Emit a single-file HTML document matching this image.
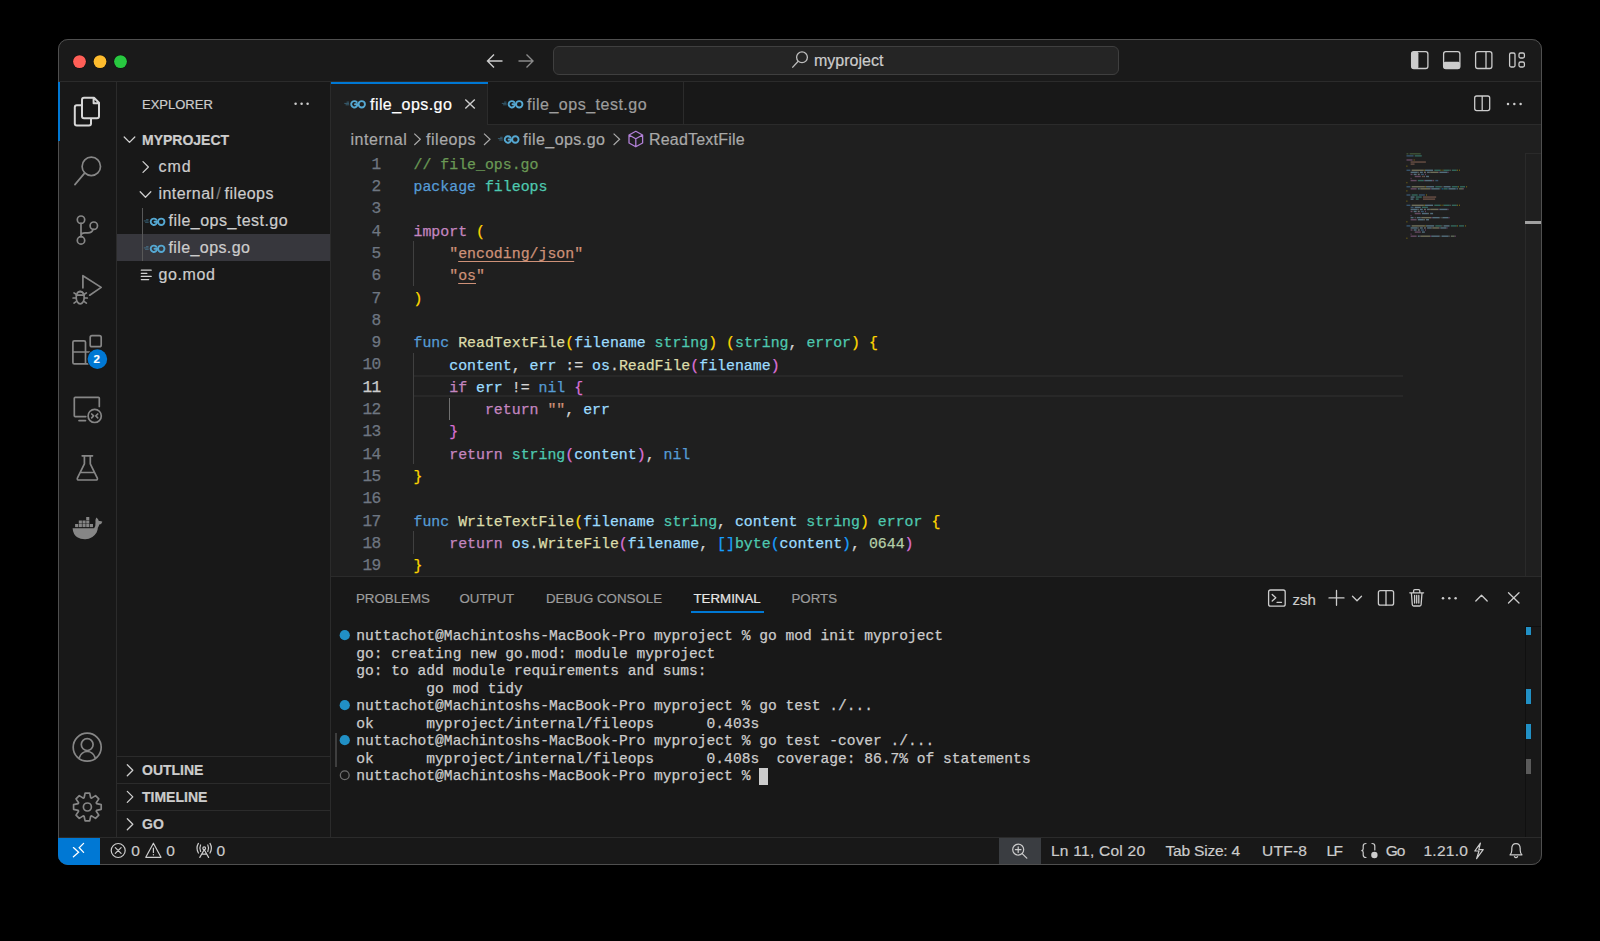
<!DOCTYPE html>
<html><head><meta charset="utf-8">
<style>
*{margin:0;padding:0;box-sizing:border-box}
html,body{width:1600px;height:941px;background:#000;overflow:hidden}
body{font-family:"Liberation Sans",sans-serif;color:#cccccc;position:relative}
.a{position:absolute}
.win{position:absolute;left:0;top:0;width:1600px;height:941px;clip-path:inset(39px 58px 76px 58px round 10px);background:#181818}
.frame{position:absolute;left:58px;top:39px;width:1484px;height:826px;border-radius:10px;border:1px solid #4f4f4f;pointer-events:none}
.m{font-family:"Liberation Mono",monospace}
svg{position:absolute;left:0;top:0;overflow:visible}
.t{position:absolute;white-space:pre;line-height:1;-webkit-text-stroke:0.2px currentColor}
.cl{position:absolute;white-space:pre;font-family:"Liberation Mono",monospace;-webkit-text-stroke:0.25px currentColor}
.cl span{-webkit-text-stroke:0.25px currentColor}
</style></head><body>
<div class="win">
<div class="a" style="left:58px;top:39px;width:1484px;height:43px;background:#1a1a1a;border-bottom:1px solid #2b2b2b"></div>
<div class="a" style="left:553px;top:46px;width:566px;height:29px;border-radius:6px;background:#252525;border:1px solid #3f3f3f"></div>
<div class="t" style="left:814px;top:52.9px;font-size:16px;color:#cccccc;">myproject</div>
<div class="a" style="left:58px;top:82px;width:59px;height:755px;background:#181818;border-right:1px solid #2b2b2b"></div>
<div class="t" style="left:93.6px;top:352.6px;font-size:11.5px;color:#ffffff;font-weight:bold">2</div>
<div class="a" style="left:117px;top:82px;width:214px;height:755px;background:#181818;border-right:1px solid #2b2b2b"></div>
<div class="t" style="left:142px;top:97.9px;font-size:13px;color:#cccccc;">EXPLORER</div>
<div class="t" style="left:142px;top:132.9px;font-size:14px;color:#cccccc;font-weight:bold">MYPROJECT</div>
<div class="t" style="left:158.5px;top:159.1px;font-size:16px;color:#cccccc;letter-spacing:0.9px">cmd</div>
<div class="t" style="left:158.5px;top:186.2px;font-size:16px;color:#cccccc;letter-spacing:0.45px">internal</div>
<div class="t" style="left:216.3px;top:186.2px;font-size:16px;color:#7a7a7a;">/</div>
<div class="t" style="left:224.5px;top:186.2px;font-size:16px;color:#cccccc;letter-spacing:0.45px">fileops</div>
<div class="a" style="left:117px;top:234px;width:213px;height:27px;background:#37373d"></div>
<div class="a" style="left:141.5px;top:208px;width:1px;height:53px;background:#585858"></div>
<div class="t" style="left:168.5px;top:213.3px;font-size:16px;color:#cccccc;letter-spacing:0.47px">file_ops_test.go</div>
<div class="t" style="left:168.5px;top:240.3px;font-size:16px;color:#cccccc;letter-spacing:0.4px">file_ops.go</div>
<div class="t" style="left:158.5px;top:267.4px;font-size:16px;color:#cccccc;letter-spacing:0.6px">go.mod</div>
<div class="a" style="left:117px;top:755.5px;width:213px;height:1px;background:#2b2b2b"></div>
<div class="a" style="left:117px;top:782.5px;width:213px;height:1px;background:#2b2b2b"></div>
<div class="a" style="left:117px;top:809.5px;width:213px;height:1px;background:#2b2b2b"></div>
<div class="t" style="left:142px;top:763.4px;font-size:14px;color:#cccccc;font-weight:bold">OUTLINE</div>
<div class="t" style="left:142px;top:790.1px;font-size:14px;color:#cccccc;font-weight:bold">TIMELINE</div>
<div class="t" style="left:142px;top:817.4px;font-size:14px;color:#cccccc;font-weight:bold">GO</div>
<div class="a" style="left:331px;top:82px;width:1211px;height:43px;background:#181818;border-bottom:1px solid #2b2b2b"></div>
<div class="a" style="left:331px;top:82px;width:157px;height:43px;background:#1f1f1f;border-right:1px solid #2b2b2b"></div>
<div class="a" style="left:331px;top:82px;width:157px;height:2px;background:#0078d4"></div>
<div class="a" style="left:488px;top:82px;width:196px;height:42px;border-right:1px solid #2b2b2b"></div>
<div class="t" style="left:370px;top:96.7px;font-size:16px;color:#ffffff;letter-spacing:0.44px">file_ops.go</div>
<div class="t" style="left:527px;top:96.7px;font-size:16px;color:#9d9d9d;letter-spacing:0.5px">file_ops_test.go</div>
<div class="a" style="left:331px;top:125px;width:1211px;height:451px;background:#1f1f1f"></div>
<div class="t" style="left:350.5px;top:132px;font-size:16px;color:#a9a9a9;letter-spacing:0.55px">internal</div>
<div class="t" style="left:426px;top:132px;font-size:16px;color:#a9a9a9;letter-spacing:0.53px">fileops</div>
<div class="t" style="left:523px;top:132px;font-size:16px;color:#a9a9a9;letter-spacing:0.46px">file_ops.go</div>
<div class="t" style="left:649px;top:132px;font-size:16px;color:#a9a9a9;letter-spacing:0.2px">ReadTextFile</div>
<div class="a" style="left:413px;top:375.2px;width:990px;height:22.3px;border-top:2px solid #282828;border-bottom:2px solid #282828"></div>
<div class="a" style="left:412.9px;top:241.4px;width:1px;height:44.6px;background:#404040"></div>
<div class="a" style="left:412.9px;top:352.9px;width:1px;height:111.5px;background:#404040"></div>
<div class="a" style="left:448.6px;top:397.5px;width:1px;height:22.3px;background:#707070"></div>
<div class="a" style="left:412.9px;top:531.3px;width:1px;height:22.3px;background:#404040"></div>
<div class="cl" style="left:330px;width:50.4px;text-align:right;top:156.79px;font-size:16.2px;letter-spacing:-0.8px;line-height:1;color:#6e7681">1</div>
<div class="cl" style="left:413.5px;top:157.80px;font-size:14.88px;line-height:1"><span style="color:#6a9955">// file_ops.go</span></div>
<div class="cl" style="left:330px;width:50.4px;text-align:right;top:179.09px;font-size:16.2px;letter-spacing:-0.8px;line-height:1;color:#6e7681">2</div>
<div class="cl" style="left:413.5px;top:180.10px;font-size:14.88px;line-height:1"><span style="color:#569cd6">package</span><span style="color:#d4d4d4"> </span><span style="color:#4ec9b0">fileops</span></div>
<div class="cl" style="left:330px;width:50.4px;text-align:right;top:201.39px;font-size:16.2px;letter-spacing:-0.8px;line-height:1;color:#6e7681">3</div>
<div class="cl" style="left:330px;width:50.4px;text-align:right;top:223.69px;font-size:16.2px;letter-spacing:-0.8px;line-height:1;color:#6e7681">4</div>
<div class="cl" style="left:413.5px;top:224.70px;font-size:14.88px;line-height:1"><span style="color:#c586c0">import</span><span style="color:#d4d4d4"> </span><span style="color:#ffd700">(</span></div>
<div class="cl" style="left:330px;width:50.4px;text-align:right;top:245.99px;font-size:16.2px;letter-spacing:-0.8px;line-height:1;color:#6e7681">5</div>
<div class="cl" style="left:413.5px;top:247.00px;font-size:14.88px;line-height:1"><span style="color:#d4d4d4">    </span><span style="color:#ce9178">&quot;</span><span style="color:#ce9178;text-decoration:underline;text-underline-offset:3px">encoding/json</span><span style="color:#ce9178">&quot;</span></div>
<div class="cl" style="left:330px;width:50.4px;text-align:right;top:268.29px;font-size:16.2px;letter-spacing:-0.8px;line-height:1;color:#6e7681">6</div>
<div class="cl" style="left:413.5px;top:269.30px;font-size:14.88px;line-height:1"><span style="color:#d4d4d4">    </span><span style="color:#ce9178">&quot;</span><span style="color:#ce9178;text-decoration:underline;text-underline-offset:3px">os</span><span style="color:#ce9178">&quot;</span></div>
<div class="cl" style="left:330px;width:50.4px;text-align:right;top:290.59px;font-size:16.2px;letter-spacing:-0.8px;line-height:1;color:#6e7681">7</div>
<div class="cl" style="left:413.5px;top:291.60px;font-size:14.88px;line-height:1"><span style="color:#ffd700">)</span></div>
<div class="cl" style="left:330px;width:50.4px;text-align:right;top:312.89px;font-size:16.2px;letter-spacing:-0.8px;line-height:1;color:#6e7681">8</div>
<div class="cl" style="left:330px;width:50.4px;text-align:right;top:335.19px;font-size:16.2px;letter-spacing:-0.8px;line-height:1;color:#6e7681">9</div>
<div class="cl" style="left:413.5px;top:336.20px;font-size:14.88px;line-height:1"><span style="color:#569cd6">func</span><span style="color:#d4d4d4"> </span><span style="color:#dcdcaa">ReadTextFile</span><span style="color:#ffd700">(</span><span style="color:#9cdcfe">filename</span><span style="color:#d4d4d4"> </span><span style="color:#4ec9b0">string</span><span style="color:#ffd700">)</span><span style="color:#d4d4d4"> </span><span style="color:#ffd700">(</span><span style="color:#4ec9b0">string</span><span style="color:#d4d4d4">, </span><span style="color:#4ec9b0">error</span><span style="color:#ffd700">)</span><span style="color:#d4d4d4"> </span><span style="color:#ffd700">{</span></div>
<div class="cl" style="left:330px;width:50.4px;text-align:right;top:357.49px;font-size:16.2px;letter-spacing:-0.8px;line-height:1;color:#6e7681">10</div>
<div class="cl" style="left:413.5px;top:358.50px;font-size:14.88px;line-height:1"><span style="color:#d4d4d4">    </span><span style="color:#9cdcfe">content</span><span style="color:#d4d4d4">, </span><span style="color:#9cdcfe">err</span><span style="color:#d4d4d4"> := </span><span style="color:#9cdcfe">os</span><span style="color:#d4d4d4">.</span><span style="color:#dcdcaa">ReadFile</span><span style="color:#da70d6">(</span><span style="color:#9cdcfe">filename</span><span style="color:#da70d6">)</span></div>
<div class="cl" style="left:330px;width:50.4px;text-align:right;top:379.79px;font-size:16.2px;letter-spacing:-0.8px;line-height:1;color:#cccccc">11</div>
<div class="cl" style="left:413.5px;top:380.80px;font-size:14.88px;line-height:1"><span style="color:#d4d4d4">    </span><span style="color:#c586c0">if</span><span style="color:#d4d4d4"> </span><span style="color:#9cdcfe">err</span><span style="color:#d4d4d4"> != </span><span style="color:#569cd6">nil</span><span style="color:#d4d4d4"> </span><span style="color:#da70d6">{</span></div>
<div class="cl" style="left:330px;width:50.4px;text-align:right;top:402.09px;font-size:16.2px;letter-spacing:-0.8px;line-height:1;color:#6e7681">12</div>
<div class="cl" style="left:413.5px;top:403.10px;font-size:14.88px;line-height:1"><span style="color:#d4d4d4">        </span><span style="color:#c586c0">return</span><span style="color:#d4d4d4"> </span><span style="color:#ce9178">&quot;&quot;</span><span style="color:#d4d4d4">, </span><span style="color:#9cdcfe">err</span></div>
<div class="cl" style="left:330px;width:50.4px;text-align:right;top:424.39px;font-size:16.2px;letter-spacing:-0.8px;line-height:1;color:#6e7681">13</div>
<div class="cl" style="left:413.5px;top:425.40px;font-size:14.88px;line-height:1"><span style="color:#d4d4d4">    </span><span style="color:#da70d6">}</span></div>
<div class="cl" style="left:330px;width:50.4px;text-align:right;top:446.69px;font-size:16.2px;letter-spacing:-0.8px;line-height:1;color:#6e7681">14</div>
<div class="cl" style="left:413.5px;top:447.70px;font-size:14.88px;line-height:1"><span style="color:#d4d4d4">    </span><span style="color:#c586c0">return</span><span style="color:#d4d4d4"> </span><span style="color:#4ec9b0">string</span><span style="color:#da70d6">(</span><span style="color:#9cdcfe">content</span><span style="color:#da70d6">)</span><span style="color:#d4d4d4">, </span><span style="color:#569cd6">nil</span></div>
<div class="cl" style="left:330px;width:50.4px;text-align:right;top:468.99px;font-size:16.2px;letter-spacing:-0.8px;line-height:1;color:#6e7681">15</div>
<div class="cl" style="left:413.5px;top:470.00px;font-size:14.88px;line-height:1"><span style="color:#ffd700">}</span></div>
<div class="cl" style="left:330px;width:50.4px;text-align:right;top:491.29px;font-size:16.2px;letter-spacing:-0.8px;line-height:1;color:#6e7681">16</div>
<div class="cl" style="left:330px;width:50.4px;text-align:right;top:513.59px;font-size:16.2px;letter-spacing:-0.8px;line-height:1;color:#6e7681">17</div>
<div class="cl" style="left:413.5px;top:514.60px;font-size:14.88px;line-height:1"><span style="color:#569cd6">func</span><span style="color:#d4d4d4"> </span><span style="color:#dcdcaa">WriteTextFile</span><span style="color:#ffd700">(</span><span style="color:#9cdcfe">filename</span><span style="color:#d4d4d4"> </span><span style="color:#4ec9b0">string</span><span style="color:#d4d4d4">, </span><span style="color:#9cdcfe">content</span><span style="color:#d4d4d4"> </span><span style="color:#4ec9b0">string</span><span style="color:#ffd700">)</span><span style="color:#d4d4d4"> </span><span style="color:#4ec9b0">error</span><span style="color:#d4d4d4"> </span><span style="color:#ffd700">{</span></div>
<div class="cl" style="left:330px;width:50.4px;text-align:right;top:535.89px;font-size:16.2px;letter-spacing:-0.8px;line-height:1;color:#6e7681">18</div>
<div class="cl" style="left:413.5px;top:536.90px;font-size:14.88px;line-height:1"><span style="color:#d4d4d4">    </span><span style="color:#c586c0">return</span><span style="color:#d4d4d4"> </span><span style="color:#9cdcfe">os</span><span style="color:#d4d4d4">.</span><span style="color:#dcdcaa">WriteFile</span><span style="color:#da70d6">(</span><span style="color:#9cdcfe">filename</span><span style="color:#d4d4d4">, </span><span style="color:#179fff">[]</span><span style="color:#4ec9b0">byte</span><span style="color:#179fff">(</span><span style="color:#9cdcfe">content</span><span style="color:#179fff">)</span><span style="color:#d4d4d4">, </span><span style="color:#b5cea8">0644</span><span style="color:#da70d6">)</span></div>
<div class="cl" style="left:330px;width:50.4px;text-align:right;top:558.19px;font-size:16.2px;letter-spacing:-0.8px;line-height:1;color:#6e7681">19</div>
<div class="cl" style="left:413.5px;top:559.20px;font-size:14.88px;line-height:1"><span style="color:#ffd700">}</span></div>
<div class="a" style="left:1525px;top:153px;width:1px;height:423px;background:#2a2a2a"></div>
<div class="a" style="left:1525px;top:153px;width:17px;height:1px;background:#2a2a2a"></div>
<div class="a" style="left:1525px;top:221px;width:17px;height:2.5px;background:#a0a0a0"></div>
<div class="a" style="left:331px;top:576px;width:1211px;height:261px;background:#181818;border-top:1px solid #2b2b2b"></div>
<div class="t" style="left:356px;top:591.9px;font-size:13.3px;color:#9d9d9d;">PROBLEMS</div>
<div class="t" style="left:459.5px;top:591.9px;font-size:13.3px;color:#9d9d9d;">OUTPUT</div>
<div class="t" style="left:546px;top:591.9px;font-size:13.3px;color:#9d9d9d;">DEBUG CONSOLE</div>
<div class="t" style="left:693.5px;top:591.9px;font-size:13.3px;color:#e7e7e7;">TERMINAL</div>
<div class="t" style="left:791.5px;top:591.9px;font-size:13.3px;color:#9d9d9d;">PORTS</div>
<div class="a" style="left:691px;top:611px;width:73px;height:1.5px;background:#0078d4"></div>
<div class="t" style="left:1292.5px;top:591.5px;font-size:15px;color:#cccccc;">zsh</div>
<div class="cl" style="left:356.3px;top:629.31px;font-size:14.6px;line-height:1;color:#cccccc">nuttachot@Machintoshs-MacBook-Pro myproject % go mod init myproject</div>
<div class="cl" style="left:356.3px;top:646.81px;font-size:14.6px;line-height:1;color:#cccccc">go: creating new go.mod: module myproject</div>
<div class="cl" style="left:356.3px;top:664.31px;font-size:14.6px;line-height:1;color:#cccccc">go: to add module requirements and sums:</div>
<div class="cl" style="left:356.3px;top:681.81px;font-size:14.6px;line-height:1;color:#cccccc">        go mod tidy</div>
<div class="cl" style="left:356.3px;top:699.31px;font-size:14.6px;line-height:1;color:#cccccc">nuttachot@Machintoshs-MacBook-Pro myproject % go test ./...</div>
<div class="cl" style="left:356.3px;top:716.81px;font-size:14.6px;line-height:1;color:#cccccc">ok      myproject/internal/fileops      0.403s</div>
<div class="cl" style="left:356.3px;top:734.31px;font-size:14.6px;line-height:1;color:#cccccc">nuttachot@Machintoshs-MacBook-Pro myproject % go test -cover ./...</div>
<div class="cl" style="left:356.3px;top:751.81px;font-size:14.6px;line-height:1;color:#cccccc">ok      myproject/internal/fileops      0.408s  coverage: 86.7% of statements</div>
<div class="cl" style="left:356.3px;top:769.31px;font-size:14.6px;line-height:1;color:#cccccc">nuttachot@Machintoshs-MacBook-Pro myproject % </div>
<div class="a" style="left:759px;top:767.5px;width:9px;height:17px;background:#cccccc"></div>
<div class="a" style="left:335px;top:733px;width:2px;height:33.5px;background:#3e3e3e"></div>
<div class="a" style="left:1525px;top:626px;width:1px;height:211px;background:#101010"></div>
<div class="a" style="left:1525px;top:626px;width:17px;height:1px;background:#101010"></div>
<div class="a" style="left:1525.5px;top:626.5px;width:5.8px;height:8.0px;background:#2190c5"></div>
<div class="a" style="left:1525.5px;top:689px;width:5.8px;height:14.8px;background:#2190c5"></div>
<div class="a" style="left:1525.5px;top:723.7px;width:5.8px;height:15.3px;background:#2190c5"></div>
<div class="a" style="left:1525.5px;top:758.7px;width:5.8px;height:15.2px;background:#5a5a5a"></div>
<div class="a" style="left:58px;top:837px;width:1484px;height:28px;background:#181818;border-top:1px solid #2b2b2b"></div>
<div class="t" style="left:131.3px;top:843.2px;font-size:15.5px;color:#cccccc;">0</div>
<div class="t" style="left:166.3px;top:843.2px;font-size:15.5px;color:#cccccc;">0</div>
<div class="t" style="left:216.6px;top:843.2px;font-size:15.5px;color:#cccccc;">0</div>
<div class="a" style="left:999px;top:838px;width:42px;height:26px;background:#3a3d41"></div>
<div class="t" style="left:1051px;top:843.2px;font-size:15.5px;color:#cccccc;letter-spacing:0.25px">Ln 11, Col 20</div>
<div class="t" style="left:1165.5px;top:843.2px;font-size:15.5px;color:#cccccc;letter-spacing:-0.2px">Tab Size: 4</div>
<div class="t" style="left:1262px;top:843.2px;font-size:15.5px;color:#cccccc;letter-spacing:0.25px">UTF-8</div>
<div class="t" style="left:1326.5px;top:843.2px;font-size:15.5px;color:#cccccc;letter-spacing:-1.5px">LF</div>
<div class="t" style="left:1385.8px;top:843.2px;font-size:15.5px;color:#cccccc;letter-spacing:-1px">Go</div>
<div class="t" style="left:1423.5px;top:843.2px;font-size:15.5px;color:#cccccc;letter-spacing:0.25px">1.21.0</div>
<svg width="1600" height="941" viewBox="0 0 1600 941">
<circle cx="79.5" cy="61.6" r="6.9" fill="#0d0d0d"/><circle cx="79.5" cy="61.6" r="6.4" fill="#ff5f57"/>
<circle cx="100" cy="61.6" r="6.9" fill="#0d0d0d"/><circle cx="100" cy="61.6" r="6.4" fill="#febc2e"/>
<circle cx="120.5" cy="61.6" r="6.9" fill="#0d0d0d"/><circle cx="120.5" cy="61.6" r="6.4" fill="#28c840"/>
<path d="M494 54.5 L487.5 61 L494 67.5 M487.5 61 H502.5" fill="none" stroke="#cccccc" stroke-width="1.4"/>
<path d="M526.5 54.5 L533 61 L526.5 67.5 M533 61 H518.5" fill="none" stroke="#8b8b8b" stroke-width="1.4"/>
<circle cx="802" cy="57.3" r="5.4" fill="none" stroke="#bdbdbd" stroke-width="1.3"/><path d="M798.2 61.2 L792.3 67.6" stroke="#bdbdbd" stroke-width="1.3"/>
<rect x="1411.6" y="51.7" width="16.3" height="16.8" rx="2.2" fill="none" stroke="#cccccc" stroke-width="1.3"/><rect x="1411.6" y="51.7" width="6.8" height="16.8" rx="1.5" fill="#cccccc"/>
<rect x="1443.6" y="51.7" width="16.3" height="16.8" rx="2.2" fill="none" stroke="#cccccc" stroke-width="1.3"/><rect x="1443.6" y="61.8" width="16.3" height="6.7" rx="1.5" fill="#cccccc"/>
<rect x="1475.6" y="51.7" width="16.3" height="16.8" rx="2.2" fill="none" stroke="#cccccc" stroke-width="1.3"/><path d="M1486 51.7 V68.5" stroke="#cccccc" stroke-width="1.3"/>
<rect x="1509.6" y="53" width="5.4" height="14" rx="1.5" fill="none" stroke="#cccccc" stroke-width="1.3"/><rect x="1519" y="53" width="5.4" height="5" rx="1.5" fill="none" stroke="#cccccc" stroke-width="1.3"/><rect x="1519" y="62" width="5.4" height="5" rx="1.5" fill="none" stroke="#cccccc" stroke-width="1.3"/>
<path d="M82 100 Q82 97.8 84 97.8 H94 L99 102.8 V116.3 Q99 118.3 97 118.3 H84 Q82 118.3 82 116.3 Z M93.6 97.8 V103.3 H99" fill="none" stroke="#d7d7d7" stroke-width="2" stroke-linejoin="round"/>
<path d="M82 105.3 H76.8 Q74.8 105.3 74.8 107.3 V123.6 Q74.8 125.6 76.8 125.6 H89 Q91 125.6 91 123.6 V118.3" fill="none" stroke="#d7d7d7" stroke-width="2" stroke-linejoin="round"/>
<circle cx="91.3" cy="166.4" r="9.2" fill="none" stroke="#868686" stroke-width="1.7" stroke-linecap="round" stroke-linejoin="round"/><path d="M84.6 173.1 L74.9 184.6" fill="none" stroke="#868686" stroke-width="1.7" stroke-linecap="round" stroke-linejoin="round"/>
<circle cx="81" cy="219.7" r="3.7" fill="none" stroke="#868686" stroke-width="1.7" stroke-linecap="round" stroke-linejoin="round"/><circle cx="81" cy="240.4" r="3.7" fill="none" stroke="#868686" stroke-width="1.7" stroke-linecap="round" stroke-linejoin="round"/><circle cx="93.8" cy="225.7" r="3.7" fill="none" stroke="#868686" stroke-width="1.7" stroke-linecap="round" stroke-linejoin="round"/><path d="M81 223.4 V236.7 M93 229.4 Q92 232.8 88 232.8 H85 Q81 232.8 81 236" fill="none" stroke="#868686" stroke-width="1.7" stroke-linecap="round" stroke-linejoin="round"/>
<path d="M82.9 287.8 V275.7 L101.2 287.4 L89.7 295.2" fill="none" stroke="#868686" stroke-width="1.7" stroke-linecap="round" stroke-linejoin="round"/>
<ellipse cx="80.2" cy="297.6" rx="4" ry="6.3" fill="none" stroke="#868686" stroke-width="1.7" stroke-linecap="round" stroke-linejoin="round"/><path d="M76.3 295.2 H84.1 M77.5 292.6 Q80.2 290.6 82.9 292.6 M74 292.9 L76.1 294.3 M86.4 292.9 L84.3 294.3 M73.1 298 H75.6 M87.3 298 H84.8 M74 303.1 L76.1 301.6 M86.4 303.1 L84.3 301.6" fill="none" stroke="#868686" stroke-width="1.7" stroke-linecap="round" stroke-linejoin="round"/>
<path d="M74.9 340.8 H84 Q85.5 340.8 85.5 342.3 V352 H97 V362.4 Q97 363.9 95.5 363.9 H74.4 Q72.9 363.9 72.9 362.4 V342.3 Q72.9 340.8 74.4 340.8 Z M72.9 352 H85.5 V363.9" fill="none" stroke="#868686" stroke-width="1.7" stroke-linecap="round" stroke-linejoin="round" stroke-width="1.5"/>
<rect x="90.2" y="335.6" width="11" height="11.1" rx="1.8" fill="none" stroke="#868686" stroke-width="1.7" stroke-linecap="round" stroke-linejoin="round" stroke-width="1.5"/>
<circle cx="97.4" cy="359.1" r="10.6" fill="#181818"/><circle cx="97.4" cy="359.1" r="9.8" fill="#0078d4"/>
<path d="M85.8 416.6 H75.2 Q74.3 416.6 74.3 415.7 V398.2 Q74.3 397.3 75.2 397.3 H98.4 Q99.3 397.3 99.3 398.2 V406.5 M79 420.6 H85.5" fill="none" stroke="#868686" stroke-width="1.7" stroke-linecap="round" stroke-linejoin="round"/><circle cx="94.7" cy="415.9" r="6.6" fill="none" stroke="#868686" stroke-width="1.7" stroke-linecap="round" stroke-linejoin="round"/><path d="M91.7 414 L93.6 415.9 L91.7 417.8 M97.7 414 L95.8 415.9 L97.7 417.8" fill="none" stroke="#868686" stroke-width="1.7" stroke-linecap="round" stroke-linejoin="round" stroke-width="1.3"/>
<path d="M82.2 455.8 H92.5 M84.4 455.8 V463.8 L77.5 477.8 Q76.6 480 79 480 H95.7 Q98.1 480 97.2 477.8 L90.3 463.8 V455.8 M81 472.5 H93.7" fill="none" stroke="#868686" stroke-width="1.7" stroke-linecap="round" stroke-linejoin="round"/>
<g fill="#868686"><path d="M72.8 527.9 H96.6 Q97.4 527.9 97.8 527 Q98.8 524.8 99 523.6 Q101.4 524 102.3 521.7 Q100.8 520.2 98.9 520.6 Q98.5 518.5 96.9 517.8 Q95.9 520 96.3 522.6 Q96.3 524.6 95.6 526 Z" opacity="0"/><path d="M72.6 528.3 H96.8 Q97.5 528.3 97.9 527.7 Q98.7 526.3 99.3 524.6 Q101.6 524.5 102.4 521.8 Q100.7 520.6 98.8 521.1 Q98.4 518.8 96.3 517.6 Q95.2 519.6 95.5 522.3 Q95.8 526 94.1 528.3 Z M72.6 528.3 Q73 534.5 77.3 537.3 Q80.5 539.3 85.3 539.2 Q92.8 539 96.6 532.5 Q97.5 530.6 97.9 528.3 Z"/><rect x="75.1" y="524" width="3.1" height="3.1"/><rect x="78.8" y="524" width="3.1" height="3.1"/><rect x="82.5" y="524" width="3.1" height="3.1"/><rect x="86.2" y="524" width="3.1" height="3.1"/><rect x="89.9" y="524" width="3.1" height="3.1"/><rect x="78.8" y="520.5" width="3.1" height="3.1"/><rect x="82.5" y="520.5" width="3.1" height="3.1"/><rect x="86.2" y="520.5" width="3.1" height="3.1"/><rect x="86.2" y="517" width="3.1" height="3.1"/></g>
<circle cx="87.2" cy="747.2" r="14" fill="none" stroke="#868686" stroke-width="1.7" stroke-linecap="round" stroke-linejoin="round"/><circle cx="87.2" cy="744.6" r="5.9" fill="none" stroke="#868686" stroke-width="1.7" stroke-linecap="round" stroke-linejoin="round"/><path d="M79.3 757.6 Q81.5 751.5 87.2 751.5 Q92.9 751.5 95.1 757.6" fill="none" stroke="#868686" stroke-width="1.7" stroke-linecap="round" stroke-linejoin="round"/>
<path d="M84.10 797.77 L85.10 793.19 L89.70 793.19 L90.70 797.77 L91.59 798.14 L95.54 795.61 L98.79 798.86 L96.26 802.81 L96.63 803.70 L101.21 804.70 L101.21 809.30 L96.63 810.30 L96.26 811.19 L98.79 815.14 L95.54 818.39 L91.59 815.86 L90.70 816.23 L89.70 820.81 L85.10 820.81 L84.10 816.23 L83.21 815.86 L79.26 818.39 L76.01 815.14 L78.54 811.19 L78.17 810.30 L73.59 809.30 L73.59 804.70 L78.17 803.70 L78.54 802.81 L76.01 798.86 L79.26 795.61 L83.21 798.14 Z" fill="none" stroke="#868686" stroke-width="1.7" stroke-linecap="round" stroke-linejoin="round" stroke-width="1.5"/><circle cx="87.4" cy="807.0" r="4" fill="none" stroke="#868686" stroke-width="1.7" stroke-linecap="round" stroke-linejoin="round" stroke-width="1.5"/>
<g fill="#cccccc"><circle cx="295.6" cy="103.8" r="1.25"/><circle cx="301.6" cy="103.8" r="1.25"/><circle cx="307.6" cy="103.8" r="1.25"/></g>
<path d="M124.2 137 L129.5 142.4 L134.8 137" fill="none" stroke="#cccccc" stroke-width="1.3" stroke-linecap="round" stroke-linejoin="round"/>
<path d="M143 161.6 L148.4 167 L143 172.4" fill="none" stroke="#cccccc" stroke-width="1.3" stroke-linecap="round" stroke-linejoin="round"/>
<path d="M140.2 191.8 L145.5 197.2 L150.8 191.8" fill="none" stroke="#cccccc" stroke-width="1.3" stroke-linecap="round" stroke-linejoin="round"/>
<g transform="translate(143.5 217.3) scale(1.0)"><path d="M0.3 3.6 H5 M1.6 5.0 H5.2 M2.6 2.3 H5" stroke="#55a8d2" stroke-width="0.9" opacity="0.5"/><path d="M12.78 2.36 A3.2 3.2 0 1 0 13.60 4.50 H11.00" fill="none" stroke="#55a8d2" stroke-width="1.9" stroke-linecap="round"/><circle cx="17.75" cy="4.5" r="3.2" fill="none" stroke="#55a8d2" stroke-width="1.9"/></g>
<g transform="translate(143.5 244.3) scale(1.0)"><path d="M0.3 3.6 H5 M1.6 5.0 H5.2 M2.6 2.3 H5" stroke="#55a8d2" stroke-width="0.9" opacity="0.5"/><path d="M12.78 2.36 A3.2 3.2 0 1 0 13.60 4.50 H11.00" fill="none" stroke="#55a8d2" stroke-width="1.9" stroke-linecap="round"/><circle cx="17.75" cy="4.5" r="3.2" fill="none" stroke="#55a8d2" stroke-width="1.9"/></g>
<path d="M141.3 270.2 H151.2 M141.3 273.3 H146.9 M141.3 276.4 H151.2 M141.3 279.5 H148.7" stroke="#d0d0d0" stroke-width="1.25" stroke-linecap="round"/>
<path d="M127.3 764.7 L132.8 770.2 L127.3 775.7" fill="none" stroke="#cccccc" stroke-width="1.3" stroke-linecap="round" stroke-linejoin="round"/>
<path d="M127.3 791.4 L132.8 796.9 L127.3 802.4" fill="none" stroke="#cccccc" stroke-width="1.3" stroke-linecap="round" stroke-linejoin="round"/>
<path d="M127.3 818.7 L132.8 824.2 L127.3 829.7" fill="none" stroke="#cccccc" stroke-width="1.3" stroke-linecap="round" stroke-linejoin="round"/>
<g transform="translate(344 99.8) scale(1.0)"><path d="M0.3 3.6 H5 M1.6 5.0 H5.2 M2.6 2.3 H5" stroke="#55a8d2" stroke-width="0.9" opacity="0.5"/><path d="M12.78 2.36 A3.2 3.2 0 1 0 13.60 4.50 H11.00" fill="none" stroke="#55a8d2" stroke-width="1.9" stroke-linecap="round"/><circle cx="17.75" cy="4.5" r="3.2" fill="none" stroke="#55a8d2" stroke-width="1.9"/></g>
<path d="M465.3 99.4 L474.8 108.6 M474.8 99.4 L465.3 108.6" stroke="#cccccc" stroke-width="1.4"/>
<g transform="translate(501.5 99.8) scale(1.0)"><path d="M0.3 3.6 H5 M1.6 5.0 H5.2 M2.6 2.3 H5" stroke="#55a8d2" stroke-width="0.9" opacity="0.5"/><path d="M12.78 2.36 A3.2 3.2 0 1 0 13.60 4.50 H11.00" fill="none" stroke="#55a8d2" stroke-width="1.9" stroke-linecap="round"/><circle cx="17.75" cy="4.5" r="3.2" fill="none" stroke="#55a8d2" stroke-width="1.9"/></g>
<rect x="1474.7" y="96" width="15" height="14.6" rx="2" fill="none" stroke="#cccccc" stroke-width="1.3"/><path d="M1482.2 96 V110.6" stroke="#cccccc" stroke-width="1.3"/>
<g fill="#cccccc"><circle cx="1508" cy="103.9" r="1.25"/><circle cx="1514.3" cy="103.9" r="1.25"/><circle cx="1520.6" cy="103.9" r="1.25"/></g>
<path d="M414.3 133.6 L420.3 139.3 L414.3 145" fill="none" stroke="#a9a9a9" stroke-width="1.2"/>
<path d="M484 133.6 L490 139.3 L484 145" fill="none" stroke="#a9a9a9" stroke-width="1.2"/>
<g transform="translate(497.6 135) scale(1.0)"><path d="M0.3 3.6 H5 M1.6 5.0 H5.2 M2.6 2.3 H5" stroke="#55a8d2" stroke-width="0.9" opacity="0.5"/><path d="M12.78 2.36 A3.2 3.2 0 1 0 13.60 4.50 H11.00" fill="none" stroke="#55a8d2" stroke-width="1.9" stroke-linecap="round"/><circle cx="17.75" cy="4.5" r="3.2" fill="none" stroke="#55a8d2" stroke-width="1.9"/></g>
<path d="M613.6 133.6 L619.6 139.3 L613.6 145" fill="none" stroke="#a9a9a9" stroke-width="1.2"/>
<path d="M635.8 131.3 L642.6 135 V143 L635.8 146.8 L629 143 V135 Z M629 135 L635.8 138.8 L642.6 135 M635.8 138.8 V146.8" fill="none" stroke="#b180d7" stroke-width="1.3" stroke-linejoin="round"/>
<g opacity="0.42"><rect x="1406.50" y="153.10" width="1.86" height="1.4" fill="#6a9955"/><rect x="1409.59" y="153.10" width="11.13" height="1.4" fill="#6a9955"/><rect x="1406.50" y="155.16" width="7.01" height="1.4" fill="#569cd6"/><rect x="1414.74" y="155.16" width="7.01" height="1.4" fill="#4ec9b0"/><rect x="1406.50" y="159.28" width="5.98" height="1.4" fill="#c586c0"/><rect x="1413.71" y="159.28" width="0.83" height="1.4" fill="#ffd700"/><rect x="1410.62" y="161.34" width="15.25" height="1.4" fill="#ce9178"/><rect x="1410.62" y="163.40" width="3.92" height="1.4" fill="#ce9178"/><rect x="1406.50" y="165.46" width="0.83" height="1.4" fill="#ffd700"/><rect x="1406.50" y="169.58" width="3.92" height="1.4" fill="#569cd6"/><rect x="1411.65" y="169.58" width="12.16" height="1.4" fill="#dcdcaa"/><rect x="1424.01" y="169.58" width="0.83" height="1.4" fill="#ffd700"/><rect x="1425.04" y="169.58" width="8.04" height="1.4" fill="#9cdcfe"/><rect x="1434.31" y="169.58" width="5.98" height="1.4" fill="#4ec9b0"/><rect x="1440.49" y="169.58" width="0.83" height="1.4" fill="#ffd700"/><rect x="1442.55" y="169.58" width="0.83" height="1.4" fill="#ffd700"/><rect x="1443.58" y="169.58" width="5.98" height="1.4" fill="#4ec9b0"/><rect x="1449.76" y="169.58" width="0.83" height="1.4" fill="#d4d4d4"/><rect x="1451.82" y="169.58" width="4.95" height="1.4" fill="#4ec9b0"/><rect x="1456.97" y="169.58" width="0.83" height="1.4" fill="#ffd700"/><rect x="1459.03" y="169.58" width="0.83" height="1.4" fill="#ffd700"/><rect x="1410.62" y="171.64" width="7.01" height="1.4" fill="#9cdcfe"/><rect x="1417.83" y="171.64" width="0.83" height="1.4" fill="#d4d4d4"/><rect x="1419.89" y="171.64" width="2.89" height="1.4" fill="#9cdcfe"/><rect x="1424.01" y="171.64" width="1.86" height="1.4" fill="#d4d4d4"/><rect x="1427.10" y="171.64" width="1.86" height="1.4" fill="#9cdcfe"/><rect x="1429.16" y="171.64" width="0.83" height="1.4" fill="#d4d4d4"/><rect x="1430.19" y="171.64" width="8.04" height="1.4" fill="#dcdcaa"/><rect x="1438.43" y="171.64" width="0.83" height="1.4" fill="#da70d6"/><rect x="1439.46" y="171.64" width="8.04" height="1.4" fill="#9cdcfe"/><rect x="1447.70" y="171.64" width="0.83" height="1.4" fill="#da70d6"/><rect x="1410.62" y="173.70" width="1.86" height="1.4" fill="#c586c0"/><rect x="1413.71" y="173.70" width="2.89" height="1.4" fill="#9cdcfe"/><rect x="1417.83" y="173.70" width="1.86" height="1.4" fill="#d4d4d4"/><rect x="1420.92" y="173.70" width="2.89" height="1.4" fill="#569cd6"/><rect x="1425.04" y="173.70" width="0.83" height="1.4" fill="#da70d6"/><rect x="1414.74" y="175.76" width="5.98" height="1.4" fill="#c586c0"/><rect x="1421.95" y="175.76" width="1.86" height="1.4" fill="#ce9178"/><rect x="1424.01" y="175.76" width="0.83" height="1.4" fill="#d4d4d4"/><rect x="1426.07" y="175.76" width="2.89" height="1.4" fill="#9cdcfe"/><rect x="1410.62" y="177.82" width="0.83" height="1.4" fill="#da70d6"/><rect x="1410.62" y="179.88" width="5.98" height="1.4" fill="#c586c0"/><rect x="1417.83" y="179.88" width="5.98" height="1.4" fill="#4ec9b0"/><rect x="1424.01" y="179.88" width="0.83" height="1.4" fill="#da70d6"/><rect x="1425.04" y="179.88" width="7.01" height="1.4" fill="#9cdcfe"/><rect x="1432.25" y="179.88" width="0.83" height="1.4" fill="#da70d6"/><rect x="1433.28" y="179.88" width="0.83" height="1.4" fill="#d4d4d4"/><rect x="1435.34" y="179.88" width="2.89" height="1.4" fill="#569cd6"/><rect x="1406.50" y="181.94" width="0.83" height="1.4" fill="#ffd700"/><rect x="1406.50" y="186.06" width="3.92" height="1.4" fill="#569cd6"/><rect x="1411.65" y="186.06" width="13.19" height="1.4" fill="#dcdcaa"/><rect x="1425.04" y="186.06" width="0.83" height="1.4" fill="#ffd700"/><rect x="1426.07" y="186.06" width="8.04" height="1.4" fill="#9cdcfe"/><rect x="1435.34" y="186.06" width="5.98" height="1.4" fill="#4ec9b0"/><rect x="1441.52" y="186.06" width="0.83" height="1.4" fill="#d4d4d4"/><rect x="1443.58" y="186.06" width="7.01" height="1.4" fill="#9cdcfe"/><rect x="1451.82" y="186.06" width="5.98" height="1.4" fill="#4ec9b0"/><rect x="1458.00" y="186.06" width="0.83" height="1.4" fill="#ffd700"/><rect x="1460.06" y="186.06" width="4.95" height="1.4" fill="#4ec9b0"/><rect x="1466.24" y="186.06" width="0.83" height="1.4" fill="#ffd700"/><rect x="1410.62" y="188.12" width="5.98" height="1.4" fill="#c586c0"/><rect x="1417.83" y="188.12" width="1.86" height="1.4" fill="#9cdcfe"/><rect x="1419.89" y="188.12" width="0.83" height="1.4" fill="#d4d4d4"/><rect x="1420.92" y="188.12" width="9.07" height="1.4" fill="#dcdcaa"/><rect x="1430.19" y="188.12" width="0.83" height="1.4" fill="#da70d6"/><rect x="1431.22" y="188.12" width="8.04" height="1.4" fill="#9cdcfe"/><rect x="1439.46" y="188.12" width="0.83" height="1.4" fill="#d4d4d4"/><rect x="1441.52" y="188.12" width="1.86" height="1.4" fill="#179fff"/><rect x="1443.58" y="188.12" width="3.92" height="1.4" fill="#4ec9b0"/><rect x="1447.70" y="188.12" width="0.83" height="1.4" fill="#179fff"/><rect x="1448.73" y="188.12" width="7.01" height="1.4" fill="#9cdcfe"/><rect x="1455.94" y="188.12" width="0.83" height="1.4" fill="#179fff"/><rect x="1456.97" y="188.12" width="0.83" height="1.4" fill="#d4d4d4"/><rect x="1459.03" y="188.12" width="3.92" height="1.4" fill="#b5cea8"/><rect x="1463.15" y="188.12" width="0.83" height="1.4" fill="#da70d6"/><rect x="1406.50" y="190.18" width="0.83" height="1.4" fill="#ffd700"/><rect x="1406.50" y="194.30" width="3.92" height="1.4" fill="#569cd6"/><rect x="1411.65" y="194.30" width="5.98" height="1.4" fill="#4ec9b0"/><rect x="1418.86" y="194.30" width="5.98" height="1.4" fill="#569cd6"/><rect x="1426.07" y="194.30" width="0.83" height="1.4" fill="#ffd700"/><rect x="1410.62" y="196.36" width="3.92" height="1.4" fill="#9cdcfe"/><rect x="1415.77" y="196.36" width="5.98" height="1.4" fill="#4ec9b0"/><rect x="1422.98" y="196.36" width="13.19" height="1.4" fill="#ce9178"/><rect x="1410.62" y="198.42" width="2.89" height="1.4" fill="#9cdcfe"/><rect x="1415.77" y="198.42" width="2.89" height="1.4" fill="#4ec9b0"/><rect x="1422.98" y="198.42" width="12.16" height="1.4" fill="#ce9178"/><rect x="1406.50" y="200.48" width="0.83" height="1.4" fill="#ffd700"/><rect x="1406.50" y="204.60" width="3.92" height="1.4" fill="#569cd6"/><rect x="1411.65" y="204.60" width="12.16" height="1.4" fill="#dcdcaa"/><rect x="1424.01" y="204.60" width="0.83" height="1.4" fill="#ffd700"/><rect x="1425.04" y="204.60" width="8.04" height="1.4" fill="#9cdcfe"/><rect x="1434.31" y="204.60" width="5.98" height="1.4" fill="#4ec9b0"/><rect x="1440.49" y="204.60" width="0.83" height="1.4" fill="#ffd700"/><rect x="1442.55" y="204.60" width="0.83" height="1.4" fill="#ffd700"/><rect x="1443.58" y="204.60" width="5.98" height="1.4" fill="#4ec9b0"/><rect x="1449.76" y="204.60" width="0.83" height="1.4" fill="#d4d4d4"/><rect x="1451.82" y="204.60" width="4.95" height="1.4" fill="#4ec9b0"/><rect x="1456.97" y="204.60" width="0.83" height="1.4" fill="#ffd700"/><rect x="1459.03" y="204.60" width="0.83" height="1.4" fill="#ffd700"/><rect x="1410.62" y="206.66" width="2.89" height="1.4" fill="#569cd6"/><rect x="1414.74" y="206.66" width="5.98" height="1.4" fill="#9cdcfe"/><rect x="1421.95" y="206.66" width="5.98" height="1.4" fill="#4ec9b0"/><rect x="1410.62" y="208.72" width="7.01" height="1.4" fill="#9cdcfe"/><rect x="1417.83" y="208.72" width="0.83" height="1.4" fill="#d4d4d4"/><rect x="1419.89" y="208.72" width="2.89" height="1.4" fill="#9cdcfe"/><rect x="1424.01" y="208.72" width="1.86" height="1.4" fill="#d4d4d4"/><rect x="1427.10" y="208.72" width="1.86" height="1.4" fill="#9cdcfe"/><rect x="1429.16" y="208.72" width="0.83" height="1.4" fill="#d4d4d4"/><rect x="1430.19" y="208.72" width="8.04" height="1.4" fill="#dcdcaa"/><rect x="1438.43" y="208.72" width="0.83" height="1.4" fill="#da70d6"/><rect x="1439.46" y="208.72" width="8.04" height="1.4" fill="#9cdcfe"/><rect x="1447.70" y="208.72" width="0.83" height="1.4" fill="#da70d6"/><rect x="1410.62" y="210.78" width="1.86" height="1.4" fill="#c586c0"/><rect x="1413.71" y="210.78" width="2.89" height="1.4" fill="#9cdcfe"/><rect x="1417.83" y="210.78" width="1.86" height="1.4" fill="#d4d4d4"/><rect x="1420.92" y="210.78" width="2.89" height="1.4" fill="#569cd6"/><rect x="1425.04" y="210.78" width="0.83" height="1.4" fill="#da70d6"/><rect x="1414.74" y="212.84" width="5.98" height="1.4" fill="#c586c0"/><rect x="1421.95" y="212.84" width="5.98" height="1.4" fill="#9cdcfe"/><rect x="1428.13" y="212.84" width="0.83" height="1.4" fill="#d4d4d4"/><rect x="1430.19" y="212.84" width="2.89" height="1.4" fill="#9cdcfe"/><rect x="1410.62" y="214.90" width="0.83" height="1.4" fill="#da70d6"/><rect x="1410.62" y="216.96" width="2.89" height="1.4" fill="#9cdcfe"/><rect x="1414.74" y="216.96" width="0.83" height="1.4" fill="#d4d4d4"/><rect x="1416.80" y="216.96" width="3.92" height="1.4" fill="#9cdcfe"/><rect x="1420.92" y="216.96" width="0.83" height="1.4" fill="#d4d4d4"/><rect x="1421.95" y="216.96" width="9.07" height="1.4" fill="#dcdcaa"/><rect x="1431.22" y="216.96" width="0.83" height="1.4" fill="#da70d6"/><rect x="1432.25" y="216.96" width="7.01" height="1.4" fill="#9cdcfe"/><rect x="1439.46" y="216.96" width="0.83" height="1.4" fill="#d4d4d4"/><rect x="1441.52" y="216.96" width="0.83" height="1.4" fill="#d4d4d4"/><rect x="1442.55" y="216.96" width="5.98" height="1.4" fill="#9cdcfe"/><rect x="1448.73" y="216.96" width="0.83" height="1.4" fill="#da70d6"/><rect x="1410.62" y="219.02" width="5.98" height="1.4" fill="#c586c0"/><rect x="1417.83" y="219.02" width="5.98" height="1.4" fill="#9cdcfe"/><rect x="1424.01" y="219.02" width="0.83" height="1.4" fill="#d4d4d4"/><rect x="1426.07" y="219.02" width="2.89" height="1.4" fill="#9cdcfe"/><rect x="1406.50" y="221.08" width="0.83" height="1.4" fill="#ffd700"/><rect x="1406.50" y="225.20" width="3.92" height="1.4" fill="#569cd6"/><rect x="1411.65" y="225.20" width="13.19" height="1.4" fill="#dcdcaa"/><rect x="1425.04" y="225.20" width="0.83" height="1.4" fill="#ffd700"/><rect x="1426.07" y="225.20" width="8.04" height="1.4" fill="#9cdcfe"/><rect x="1435.34" y="225.20" width="5.98" height="1.4" fill="#4ec9b0"/><rect x="1441.52" y="225.20" width="0.83" height="1.4" fill="#d4d4d4"/><rect x="1443.58" y="225.20" width="5.98" height="1.4" fill="#9cdcfe"/><rect x="1450.79" y="225.20" width="5.98" height="1.4" fill="#4ec9b0"/><rect x="1456.97" y="225.20" width="0.83" height="1.4" fill="#ffd700"/><rect x="1459.03" y="225.20" width="4.95" height="1.4" fill="#4ec9b0"/><rect x="1465.21" y="225.20" width="0.83" height="1.4" fill="#ffd700"/><rect x="1410.62" y="227.26" width="7.01" height="1.4" fill="#9cdcfe"/><rect x="1417.83" y="227.26" width="0.83" height="1.4" fill="#d4d4d4"/><rect x="1419.89" y="227.26" width="2.89" height="1.4" fill="#9cdcfe"/><rect x="1424.01" y="227.26" width="1.86" height="1.4" fill="#d4d4d4"/><rect x="1427.10" y="227.26" width="3.92" height="1.4" fill="#9cdcfe"/><rect x="1431.22" y="227.26" width="0.83" height="1.4" fill="#d4d4d4"/><rect x="1432.25" y="227.26" width="7.01" height="1.4" fill="#dcdcaa"/><rect x="1439.46" y="227.26" width="0.83" height="1.4" fill="#da70d6"/><rect x="1440.49" y="227.26" width="5.98" height="1.4" fill="#9cdcfe"/><rect x="1446.67" y="227.26" width="0.83" height="1.4" fill="#da70d6"/><rect x="1410.62" y="229.32" width="1.86" height="1.4" fill="#c586c0"/><rect x="1413.71" y="229.32" width="2.89" height="1.4" fill="#9cdcfe"/><rect x="1417.83" y="229.32" width="1.86" height="1.4" fill="#d4d4d4"/><rect x="1420.92" y="229.32" width="2.89" height="1.4" fill="#569cd6"/><rect x="1425.04" y="229.32" width="0.83" height="1.4" fill="#da70d6"/><rect x="1414.74" y="231.38" width="5.98" height="1.4" fill="#c586c0"/><rect x="1421.95" y="231.38" width="2.89" height="1.4" fill="#9cdcfe"/><rect x="1410.62" y="233.44" width="0.83" height="1.4" fill="#da70d6"/><rect x="1410.62" y="235.50" width="5.98" height="1.4" fill="#c586c0"/><rect x="1417.83" y="235.50" width="1.86" height="1.4" fill="#9cdcfe"/><rect x="1419.89" y="235.50" width="0.83" height="1.4" fill="#d4d4d4"/><rect x="1420.92" y="235.50" width="9.07" height="1.4" fill="#dcdcaa"/><rect x="1430.19" y="235.50" width="0.83" height="1.4" fill="#da70d6"/><rect x="1431.22" y="235.50" width="8.04" height="1.4" fill="#9cdcfe"/><rect x="1439.46" y="235.50" width="0.83" height="1.4" fill="#d4d4d4"/><rect x="1441.52" y="235.50" width="7.01" height="1.4" fill="#9cdcfe"/><rect x="1448.73" y="235.50" width="0.83" height="1.4" fill="#d4d4d4"/><rect x="1450.79" y="235.50" width="3.92" height="1.4" fill="#b5cea8"/><rect x="1454.91" y="235.50" width="0.83" height="1.4" fill="#da70d6"/><rect x="1406.50" y="237.56" width="0.83" height="1.4" fill="#ffd700"/></g>
<rect x="1268.6" y="590" width="16.6" height="16.2" rx="2" fill="none" stroke="#cccccc" stroke-width="1.3" stroke-linecap="round" stroke-linejoin="round"/><path d="M1272.2 594.5 L1275.8 597.8 L1272.2 601.1 M1277 602.3 H1281.5" fill="none" stroke="#cccccc" stroke-width="1.3" stroke-linecap="round" stroke-linejoin="round"/>
<path d="M1336.5 590.5 V605.3 M1329 597.9 H1344" fill="none" stroke="#cccccc" stroke-width="1.3" stroke-linecap="round" stroke-linejoin="round"/><path d="M1352.5 596.3 L1357 600.8 L1361.5 596.3" fill="none" stroke="#cccccc" stroke-width="1.3" stroke-linecap="round" stroke-linejoin="round"/>
<rect x="1378.4" y="590.6" width="15.2" height="14.6" rx="2" fill="none" stroke="#cccccc" stroke-width="1.3" stroke-linecap="round" stroke-linejoin="round"/><path d="M1386 590.6 V605.2" fill="none" stroke="#cccccc" stroke-width="1.3" stroke-linecap="round" stroke-linejoin="round"/>
<path d="M1409.8 592.8 H1423.6 M1413.6 592.8 V590.8 Q1413.6 589.6 1414.8 589.6 H1418.6 Q1419.8 589.6 1419.8 590.8 V592.8 M1411.4 592.8 L1412.3 604.8 Q1412.4 606 1413.6 606 H1419.8 Q1421 606 1421.1 604.8 L1422 592.8 M1414.6 595.5 V603 M1416.7 595.5 V603 M1418.8 595.5 V603" fill="none" stroke="#cccccc" stroke-width="1.3" stroke-linecap="round" stroke-linejoin="round"/>
<g fill="#cccccc"><circle cx="1443" cy="598.2" r="1.25"/><circle cx="1449.3" cy="598.2" r="1.25"/><circle cx="1455.6" cy="598.2" r="1.25"/></g>
<path d="M1475.8 601 L1481.5 595.2 L1487.2 601" fill="none" stroke="#cccccc" stroke-width="1.3" stroke-linecap="round" stroke-linejoin="round"/>
<path d="M1508.5 592.8 L1519 603 M1519 592.8 L1508.5 603" fill="none" stroke="#cccccc" stroke-width="1.3" stroke-linecap="round" stroke-linejoin="round"/>
<circle cx="344.75" cy="635.20" r="5.1" fill="#2190c5"/>
<circle cx="344.75" cy="705.20" r="5.1" fill="#2190c5"/>
<circle cx="344.75" cy="740.20" r="5.1" fill="#2190c5"/>
<circle cx="344.75" cy="775.20" r="4.4" fill="none" stroke="#6e6e6e" stroke-width="1.3"/>
<circle cx="118.2" cy="850.5" r="7" fill="none" stroke="#cccccc" stroke-width="1.2" stroke-linecap="round" stroke-linejoin="round"/><path d="M115.3 847.6 L121.1 853.4 M121.1 847.6 L115.3 853.4" fill="none" stroke="#cccccc" stroke-width="1.2" stroke-linecap="round" stroke-linejoin="round"/>
<path d="M153.4 843.2 L161 857.3 H145.8 Z M153.4 848 V852.5" fill="none" stroke="#cccccc" stroke-width="1.2" stroke-linecap="round" stroke-linejoin="round"/><circle cx="153.4" cy="854.8" r="0.7" fill="#cccccc"/>
<circle cx="204.2" cy="848.2" r="1.4" fill="none" stroke="#cccccc" stroke-width="1.2" stroke-linecap="round" stroke-linejoin="round"/><path d="M200.6 845 Q199 848.2 200.6 851.4 M207.8 845 Q209.4 848.2 207.8 851.4 M198.4 843.4 Q195.6 848.2 198.4 853 M210 843.4 Q212.8 848.2 210 853 M204.2 849.8 L199.8 857.4 M204.2 849.8 L208.6 857.4 M201.6 854.2 H206.8" fill="none" stroke="#cccccc" stroke-width="1.2" stroke-linecap="round" stroke-linejoin="round"/>
<circle cx="1018.2" cy="849.6" r="5.5" fill="none" stroke="#cccccc" stroke-width="1.2" stroke-linecap="round" stroke-linejoin="round"/><path d="M1022.2 853.6 L1026.8 858.2 M1018.2 846.8 V852.4 M1015.4 849.6 H1021" fill="none" stroke="#cccccc" stroke-width="1.2" stroke-linecap="round" stroke-linejoin="round"/>
<path d="M1366 843.5 Q1363.2 843.5 1363.2 846 V848.8 Q1363.2 850.4 1361.8 850.6 Q1363.2 850.8 1363.2 852.4 V855 Q1363.2 857.5 1366 857.5 M1372 843.5 Q1374.8 843.5 1374.8 846 V850" fill="none" stroke="#cccccc" stroke-width="1.2" stroke-linecap="round" stroke-linejoin="round"/><circle cx="1374.4" cy="855" r="3.2" fill="#cccccc"/>
<path d="M1480.4 843.2 L1474.8 851 H1479 L1476.6 858.6 L1483.2 849.6 H1478.8 Z" fill="none" stroke="#cccccc" stroke-width="1.2" stroke-linecap="round" stroke-linejoin="round"/>
<path d="M1510 854.8 H1522 Q1520.2 853 1520.2 850.2 V848.6 Q1520.2 843.6 1516 843.6 Q1511.8 843.6 1511.8 848.6 V850.2 Q1511.8 853 1510 854.8 Z M1514.4 856.6 Q1516 858.6 1517.6 856.6" fill="none" stroke="#cccccc" stroke-width="1.2" stroke-linecap="round" stroke-linejoin="round"/>
</svg>
</div>
<div class="frame"></div>
<div class="a" style="left:58px;top:82px;width:2px;height:59px;background:#0078d4"></div>
<div class="a" style="left:58px;top:837.8px;width:42px;height:27.2px;background:#0078d4;border-bottom-left-radius:10px"></div>
<svg width="1600" height="941" style="position:absolute;left:0;top:0"><path d="M73.4 847.6 L78.6 852.2 L73.4 856.8 M83.6 843.4 L79.2 847.8 L83.6 852.4" fill="none" stroke="#ffffff" stroke-width="1.3" stroke-linecap="round"/></svg>
<div class="t" style="left:93.6px;top:353.7px;font-size:11.5px;color:#fff;font-weight:bold">2</div>
</body></html>
